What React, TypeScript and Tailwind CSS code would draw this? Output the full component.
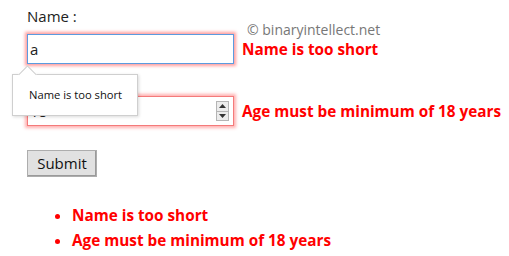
const font = { fontFamily: '"Open Sans", "Noto Sans", sans-serif' };

function Spinner() {
  return (
    <div className="absolute right-[4px] top-[4px] flex h-[20px] w-[13px] flex-col border border-[#b5b5b5] bg-[#ececec]">
      <div className="flex flex-1 items-center justify-center border-b border-[#b5b5b5]">
        <svg width="7" height="4" viewBox="0 0 7 4">
          <path d="M0 4 L3.5 0 L7 4 Z" fill="#333" />
        </svg>
      </div>
      <div className="flex flex-1 items-center justify-center">
        <svg width="7" height="4" viewBox="0 0 7 4">
          <path d="M0 0 L3.5 4 L7 0 Z" fill="#333" />
        </svg>
      </div>
    </div>
  );
}

export default function App() {
  return (
    <div className="relative h-[256px] w-[509px] bg-white text-[15px] text-[#222]" style={font}>
      <div className="absolute left-[247px] top-[19px] text-[14px] text-[#777]">© binaryintellect.net</div>
      <div className="flex flex-col pl-[27px] pt-[6px]">
        <div className="h-[28px] leading-[20px]">Name :</div>
        <div className="flex items-center gap-[8px]">
          <div className="relative flex h-[30px] w-[207px] items-center border border-[#5b9bdf] px-[2px] shadow-[0_0_3px_2px_rgba(255,80,80,0.55)]">
            <span className="text-[15px]">a</span>
            <div className="absolute left-[-16px] top-[39px] z-10 flex h-[42px] w-[126px] items-center border border-[#cfcfcf] bg-white pl-[16px] text-[11.2px] text-[#111] shadow-[1px_1px_3px_rgba(0,0,0,0.15)]">
              Name is too short
              <div className="absolute left-[8px] top-[-7px] h-[13px] w-[13px] rotate-45 border-l border-t border-[#cfcfcf] bg-white" />
            </div>
          </div>
          <span className="text-[15.3px] font-bold text-[#ff0000]">Name is too short</span>
        </div>
        <div className="mt-[32px] flex items-center gap-[8px]">
          <div className="relative flex h-[30px] w-[207px] items-center border border-[#f47a7a] px-[2px] shadow-[0_0_3px_2px_rgba(255,80,80,0.45)]">
            <span className="text-[15px]">18</span>
            <Spinner />
          </div>
          <span className="text-[15.3px] font-bold text-[#ff0000]">Age must be minimum of 18 years</span>
        </div>
        <div className="mt-[24px]">
          <button className="h-[27px] w-[70px] border border-[#adadad] bg-[#e1e1e1] text-[15px] leading-none text-[#111] shadow-[inset_-1px_-1px_0_#9a9a9a]">
            Submit
          </button>
        </div>
        <ul className="mt-[26px] list-disc pl-[45px] text-[15.3px] font-bold leading-[25px] text-[#ff0000]">
          <li>Name is too short</li>
          <li>Age must be minimum of 18 years</li>
        </ul>
      </div>
    </div>
  );
}
